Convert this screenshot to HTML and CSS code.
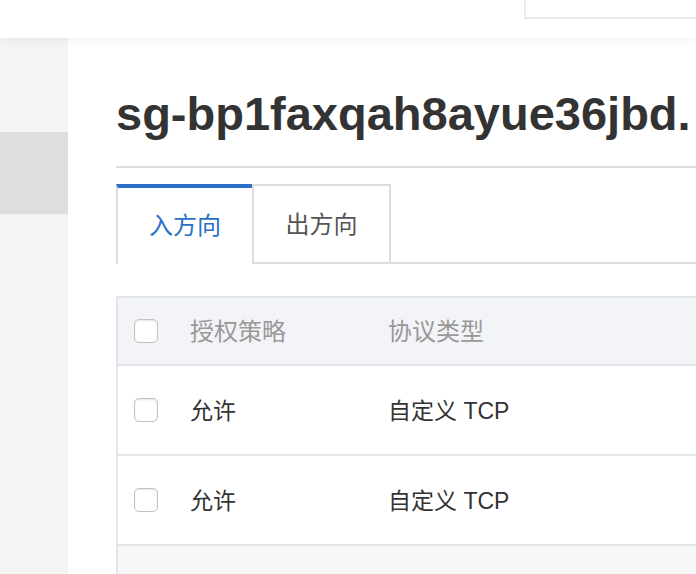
FILE: index.html
```html
<!DOCTYPE html>
<html lang="zh-CN">
<head>
    <meta charset="UTF-8">
    <meta name="viewport" content="width=device-width, initial-scale=1.0">
    <title>安全组规则</title>
    <link rel="stylesheet" href="styles.css">
</head>
<body>
    <div class="topbar">
        <div class="search-box"></div>
    </div>

    <div class="layout">
        <div class="sidebar">
            <div class="side-item active"></div>
        </div>

        <div class="main">
            <h1 class="page-title">sg-bp1faxqah8ayue36jbd.</h1>
            <div class="divider"></div>

            <div class="tabs">
                <div class="tab active">入方向</div>
                <div class="tab">出方向</div>
                <div class="tab-rest"></div>
            </div>

            <div class="rule-table">
                <div class="row head">
                    <div class="cell check"><span class="checkbox"></span></div>
                    <div class="cell">授权策略</div>
                    <div class="cell">协议类型</div>
                </div>
                <div class="row">
                    <div class="cell check"><span class="checkbox"></span></div>
                    <div class="cell">允许</div>
                    <div class="cell">自定义 TCP</div>
                </div>
                <div class="row">
                    <div class="cell check"><span class="checkbox"></span></div>
                    <div class="cell">允许</div>
                    <div class="cell">自定义 TCP</div>
                </div>
                <div class="table-foot"></div>
            </div>
        </div>
    </div>
</body>
</html>
```

FILE: styles.css
```css
* {
    box-sizing: border-box;
}

html, body {
    height: 100%;
}

body {
    margin: 0;
    overflow: hidden;
    background-color: #fff;
    color: #333;
    font-family: "Liberation Sans", "Noto Sans CJK SC", sans-serif;
}

.topbar {
    position: relative;
    z-index: 2;
    height: 38px;
    padding-left: 524px;
    background-color: #fff;
    box-shadow: 0 3px 8px rgba(0, 0, 0, 0.05);
}

.search-box {
    width: 220px;
    height: 19px;
    border: 2px solid #ececec;
    border-top: none;
}

.layout {
    display: flex;
    height: calc(100% - 38px);
}

.sidebar {
    width: 68px;
    flex-shrink: 0;
    padding-top: 94px;
    background-color: #f4f4f4;
}

.side-item {
    height: 82px;
}

.side-item.active {
    background-color: #dedede;
}

.main {
    flex: 1;
    min-width: 0;
    padding: 44px 0 0 48px;
}

.page-title {
    margin: 0;
    height: 64px;
    line-height: 64px;
    font-size: 47px;
    font-weight: 700;
    white-space: nowrap;
    color: #333;
}

.divider {
    height: 2px;
    margin-top: 20px;
    background-color: #dcdcdc;
}

.tabs {
    display: flex;
    margin-top: 16px;
    height: 80px;
}

.tab {
    display: flex;
    align-items: center;
    justify-content: center;
    padding-bottom: 3px;
    border: 2px solid #dcdcdc;
    font-size: 24px;
    color: #555;
}

.tab.active {
    width: 136px;
    padding-bottom: 6px;
    border-top: 4px solid #2b6fc7;
    border-right: none;
    border-bottom: none;
    color: #2b6fc7;
}

.tab:not(.active) {
    width: 139px;
}

.tab-rest {
    flex: 1;
    border-bottom: 2px solid #dcdcdc;
}

.rule-table {
    margin-top: 32px;
    border-left: 2px solid #e2e5ea;
    border-top: 2px solid #e2e5ea;
}

.row {
    display: grid;
    grid-template-columns: 72px 198px 1fr;
    align-items: center;
    height: 90px;
    border-bottom: 2px solid #e2e5ea;
    font-size: 23px;
    color: #333;
}

.row .cell {
    margin-top: -3px;
}

.row.head {
    height: 68px;
    background-color: #f3f4f8;
    font-size: 24px;
    color: #999;
}

.row.head .cell {
    margin-top: -4px;
}

.row .cell.check {
    margin-top: 0;
    padding-left: 16px;
    display: flex;
}

.checkbox {
    width: 24px;
    height: 24px;
    border: 1px solid #c2c2c2;
    border-radius: 5px;
    background-color: #fff;
    box-shadow: inset 0 1px 2px rgba(0, 0, 0, 0.1);
}

.table-foot {
    height: 60px;
    background-color: #f7f7f7;
}
```
